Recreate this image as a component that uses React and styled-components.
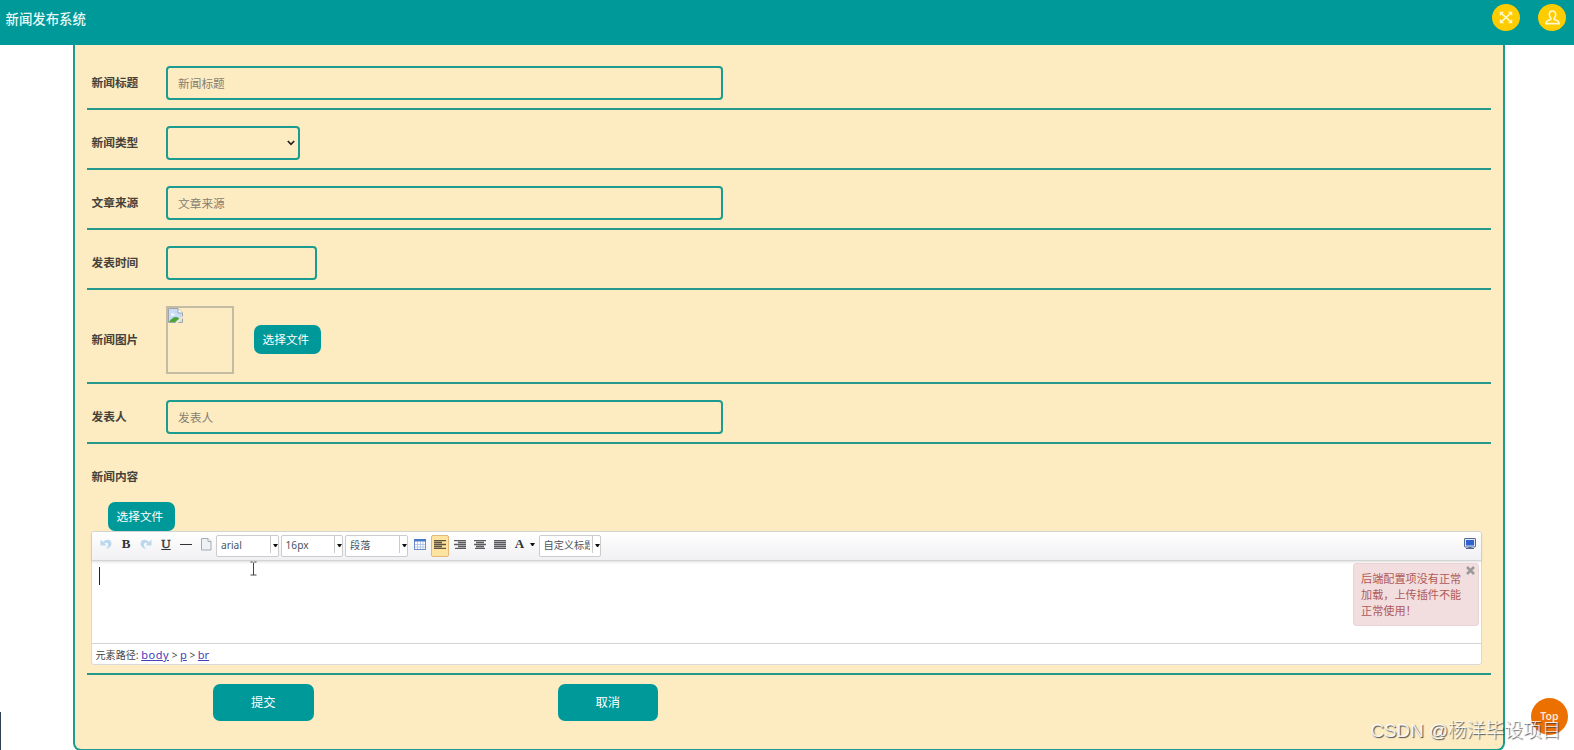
import React from 'react';
import styled, { createGlobalStyle, css } from 'styled-components';

const GlobalStyle = createGlobalStyle`
    * {
        box-sizing: border-box;
    }

    body {
        margin: 0;
        overflow: hidden;
        background: #fff;
        font-family: 'Noto Sans', 'Noto Sans CJK SC', sans-serif;
    }
`;

const Page = styled.div`
    position: relative;
    height: 750px;
    overflow: hidden;
`;

const Header = styled.header`
    display: flex;
    justify-content: space-between;
    height: 45px;
    padding: 4px 8px 0 5.5px;
    background: #099;
`;

const Title = styled.div`
    height: 30px;
    line-height: 30px;
    color: #e8f8f6;
    font-size: 13.4px;
    font-weight: 500;
`;

const HeaderActions = styled.div`
    display: flex;
    gap: 18px;
`;

const RoundButton = styled.div`
    display: flex;
    align-items: center;
    justify-content: center;
    width: 28px;
    height: 27px;
    border-radius: 50%;
    background: #fc0;
`;

const Panel = styled.main`
    width: 1432px;
    height: 706px;
    margin-left: 73px;
    padding: 5px 12px 0;
    border: 2px solid #1c9c90;
    border-top: 0;
    border-radius: 0 0 8px 8px;
    background: #fdecc2;
`;

const Row = styled.div`
    display: flex;
    align-items: center;
    height: ${({ $height }) => $height || 60}px;
    padding: 7px 0 0 4px;
    border-bottom: 2px solid #259a8c;
`;

const Label = styled.label`
    width: 75px;
    padding: 0 0 2px 0.5px;
    color: #45423a;
    font-size: 11.7px;
    font-weight: 600;
    line-height: 18px;
`;

const field = css`
    width: ${({ $width }) => $width}px;
    height: 34px;
    border: 2px solid #1c9c90;
    border-radius: 4px;
    background: transparent;
`;

const Input = styled.input`
    ${field}
    padding: 0 10px;
    outline: 0;
    font-family: inherit;
    font-size: 11.7px;

    &::placeholder {
        color: #857f71;
    }
`;

const Select = styled.div`
    ${field}
    display: flex;
    align-items: center;
    justify-content: flex-end;
    padding-right: 3px;
`;

const Preview = styled.div`
    width: 68px;
    height: 68px;
    margin: 1px 20px 0 0;
    border: 2px solid #c3bba4;

    svg {
        display: block;
    }
`;

const FileButton = styled.div`
    width: 67px;
    height: 29px;
    padding-left: 8.5px;
    border-radius: 7px;
    background: #099;
    color: #fff;
    font-size: 11.7px;
    line-height: 28px;
`;

const ContentRow = styled.div`
    height: 231px;
    padding: 24px 9px 0 4px;
    border-bottom: 2px solid #259a8c;
`;

const ContentLabel = styled(Label)`
    display: block;
    margin-bottom: 16px;
    padding-bottom: 0;
    line-height: 17px;
`;

const ContentFile = styled(FileButton)`
    margin: 17px 0 0 17px;
`;

const Editor = styled.div`
    position: relative;
    height: 134px;
    border: 1px solid #d9d9d9;
    border-radius: 3px;
    background: #fff;
`;

const Toolbar = styled.div`
    display: flex;
    align-items: center;
    height: 29px;
    padding: 0 4px 4px 4px;
    border-bottom: 1px solid #d4d4d4;
    border-radius: 3px 3px 0 0;
    background: linear-gradient(#fff, #f1f0f3);
    box-shadow: 0 1px 3px rgba(0, 0, 0, 0.14);
`;

const Tool = styled.span`
    display: flex;
    flex: none;
    align-items: center;
    justify-content: center;
    width: 20px;
    height: 22px;
    color: #333;
    font: ${({ $bold }) => ($bold ? 'bold' : 'normal')} 13px/20px 'Liberation Serif', serif;
    text-decoration: ${({ $underline }) => ($underline ? 'underline' : 'none')};
`;

const Underlined = styled(Tool)`
    -webkit-text-stroke: 0.4px #333;
`;

const ActiveTool = styled(Tool)`
    width: 18px;
    margin: 3px 1px 0;
    padding-bottom: 3px;
    border: 1px solid #e0b878;
    border-radius: 2px;
    background: #ffe39f;
`;

const Combo = styled.span`
    display: flex;
    flex: none;
    width: 62.5px;
    height: 22px;
    margin: 3px 2px 0 0;
    border: 1px solid #ccc;
    border-radius: 2px;
    background: #fff;
`;

const ComboText = styled.span`
    width: 54px;
    height: 17px;
    padding-left: 4px;
    overflow: hidden;
    border-right: 1px solid #ccc;
    color: #4a5560;
    font-size: 10.2px;
    line-height: 18px;
    white-space: nowrap;
`;

const ComboClip = styled.span`
    display: block;
    width: 46px;
    overflow: hidden;
`;

const Arrow = styled.span`
    width: 5px;
    height: 3px;
    margin: ${({ $inline }) => ($inline ? '1px 4px 0 0' : '8px 0 0 2px')};
    border: 2.5px solid transparent;
    border-top: 3px solid #111;
    border-bottom: 0;
`;

const EndTool = styled(Tool)`
    width: 14px;
    margin-left: auto;
    padding-bottom: 2px;
`;

const EditBody = styled.div`
    height: 82px;
    padding: 6px 7px;
`;

const Caret = styled.div`
    width: 1px;
    height: 18px;
    background: #222;
`;

const PathBar = styled.div`
    height: 21px;
    padding-left: 3.5px;
    border-top: 1px solid #d4d4d4;
    color: #444;
    font-size: 10.1px;
    line-height: 21px;
`;

const PathLink = styled.a`
    color: #4640b8;
    font-size: 11px;
    letter-spacing: ${({ $spacing }) => $spacing || 0}px;
    text-decoration: underline;
`;

const Message = styled.div`
    position: absolute;
    top: 31px;
    right: 2px;
    width: 126px;
    height: 63px;
    padding: 7px 16px 0 7px;
    border: 1px solid #ebd3d5;
    border-radius: 3px;
    background: #f2dede;
    color: #b05a59;
    font-size: 11.15px;
    line-height: 16px;
    white-space: nowrap;
`;

const Close = styled.svg`
    position: absolute;
    top: 2px;
    right: 3px;
`;

const Pointer = styled.svg`
    position: absolute;
    top: 29px;
    left: 158px;
`;

const Buttons = styled.div`
    display: flex;
    gap: 244px;
    padding: 8.5px 0 0 126px;
`;

const FormButton = styled.div`
    width: 100.5px;
    height: 37px;
    border-radius: 7px;
    background: #099;
    color: #fff;
    font-size: 12.3px;
    line-height: 38px;
    text-align: center;
`;

const TopButton = styled.div`
    position: absolute;
    top: 698px;
    left: 1531px;
    width: 37px;
    height: 37px;
    border-radius: 50%;
    background: #ec7000;
    color: #fbe6d2;
    font-size: 10.5px;
    font-weight: 600;
    line-height: 37px;
    text-align: center;
`;

const Watermark = styled.div`
    position: absolute;
    top: 716px;
    left: 1370.5px;
    color: rgba(255, 255, 255, 0.88);
    font-family: 'Liberation Sans', 'Noto Sans CJK SC', sans-serif;
    font-size: 18.8px;
    font-weight: 300;
    line-height: 30px;
    text-shadow: 1px 1px 1px rgba(60, 60, 60, 0.9);
    white-space: nowrap;
`;

const SideTab = styled.div`
    position: absolute;
    top: 712px;
    left: 0;
    width: 1px;
    height: 38px;
    background: #2f4050;
`;

const ExpandIcon = () => (
    <svg width="14" height="13" viewBox="0 0 15 14" fill="none" stroke="#fff8d0" strokeWidth="1.7">
        <path d="M2 2l11 10M13 2L2 12" />
        <path d="M.8.800h4.700L.8 5.500zM14.200.8v4.700L9.500.8zM.8 13.200V8.500l4.700 4.700zM14.200 13.200H9.500l4.700-4.700z" fill="#fff8d0" stroke="none" />
    </svg>
);

const UserIcon = () => (
    <svg width="15" height="15" viewBox="0 0 15 15" fill="none" stroke="#fff8d0" strokeWidth="1.6">
        <path d="M7.500 1C5.500 1 4.300 2.400 4.300 4.500c0 1.700.6 2.900 1.500 3.700v1.300L2.500 10.800C1.400 11.300 1 12.300.9 13.600h13.200c-.1-1.300-.5-2.300-1.600-2.800L9.200 9.500V8.200c.9-.8 1.500-2 1.500-3.700C10.700 2.400 9.500 1 7.500 1z" />
    </svg>
);

const UndoIcon = ({ flip }) => (
    <svg width="12" height="12" viewBox="0 0 12 12" transform={flip ? 'scale(-1 1)' : undefined}>
        <path d="M.5 1.500v6h6L4.500 5.600c1.800-1.500 3.600-.6 3.600 1.200 0 1.500-.8 2.500-2 4.200 3-.7 5.400-2.800 5.400-5.500C11.500 1.500 6.500.100 3 3.900z" fill="#bcd8ee" />
    </svg>
);

const PageIcon = () => (
    <svg width="12" height="13" viewBox="0 0 12 13">
        <path d="M1.500.5h6.500l3 3v8.500h-9.500z" fill="#eef2f6" stroke="#a5abb3" />
        <path d="M8 .5v3h3" fill="#fff" stroke="#a5abb3" />
    </svg>
);

const TableIcon = () => (
    <svg width="12" height="11" viewBox="0 0 12 11">
        <rect x=".5" y=".5" width="11" height="10" fill="#fff" stroke="#6d8fc9" />
        <rect width="12" height="2.500" fill="#4878c8" />
        <path d="M1 5.500h10M1 8h10M3.500 3v7M6.500 3v7M9 3v7" stroke="#a7bfdf" strokeWidth=".8" />
    </svg>
);

const alignLines = {
    left: 'M0 .5h12M0 2.500h8M0 4.500h12M0 6.500h8M0 8.500h12',
    right: 'M0 .5h12M4 2.500h8M0 4.500h12M4 6.500h8M1 8.500h11',
    center: 'M0 .5h12M2 2.500h8M0 4.500h12M2 6.500h8M1 8.500h10',
    justify: 'M0 .5h12M0 2.500h12M0 4.500h12M0 6.500h12M0 8.500h12',
};

const AlignIcon = ({ type }) => (
    <svg width="12" height="9" viewBox="0 0 12 9">
        <path d={alignLines[type]} stroke={type === 'left' ? '#5d5644' : '#5c5a60'} strokeWidth="1.3" />
    </svg>
);

const MonitorIcon = () => (
    <svg width="12" height="11" viewBox="0 0 12 11">
        <rect x=".5" y=".5" width="11" height="8.500" rx=".5" fill="#dfe7f5" stroke="#53698f" />
        <rect x="2" y="2" width="8" height="5.500" fill="#2f62cf" />
        <path d="M4.500 9h3v1H10v1H2v-1h2.500z" fill="#53698f" />
    </svg>
);

const BrokenImage = () => (
    <svg width="15" height="15" viewBox="0 0 15 15">
        <path d="M.5.5h9.500l4.500 4.500v9.500H.5z" fill="#c8dcf5" stroke="#a0a5ac" />
        <path d="M10 .5V5h4.500" fill="#fff" stroke="#a0a5ac" />
        <path d="M3 6.500c0-1.500 2-1.800 2.400-.6C7 5.500 7.300 7.500 6 7.500H3z" fill="#fff" />
        <path d="M1 14c1.500-3 4.500-5 7-5 2 0 2.800 1 3 2l-4 3z" fill="#4ca636" />
        <path d="M7.500 15L15 8v2l-5 5z" fill="#fdecc2" />
    </svg>
);

const ComboBox = ({ text }) => (
    <Combo>
        <ComboText>
            <ComboClip>{text}</ComboClip>
        </ComboText>
        <Arrow />
    </Combo>
);

const TextRow = ({ label }) => (
    <Row>
        <Label>{label}</Label>
        <Input $width={557} placeholder={label} />
    </Row>
);

export default () => (
    <Page>
        <GlobalStyle />
        <Header>
            <Title>新闻发布系统</Title>
            <HeaderActions>
                <RoundButton>
                    <ExpandIcon />
                </RoundButton>
                <RoundButton>
                    <UserIcon />
                </RoundButton>
            </HeaderActions>
        </Header>
        <Panel>
            <TextRow label="新闻标题" />
            <Row>
                <Label>新闻类型</Label>
                <Select $width={134}>
                    <svg width="8" height="6" viewBox="0 0 8 6">
                        <path d="M.8 1L4 4.300 7.200 1" fill="none" stroke="#222" strokeWidth="1.700" />
                    </svg>
                </Select>
            </Row>
            <TextRow label="文章来源" />
            <Row>
                <Label>发表时间</Label>
                <Input $width={151} />
            </Row>
            <Row $height={94}>
                <Label>新闻图片</Label>
                <Preview>
                    <BrokenImage />
                </Preview>
                <FileButton>选择文件</FileButton>
            </Row>
            <TextRow label="发表人" />
            <ContentRow>
                <ContentLabel>新闻内容</ContentLabel>
                <ContentFile>选择文件</ContentFile>
                <Editor>
                    <Toolbar>
                        <Tool><UndoIcon /></Tool>
                        <Tool $bold>B</Tool>
                        <Tool><UndoIcon flip /></Tool>
                        <Underlined $underline>U</Underlined>
                        <Tool>
                            <svg width="12" height="1"><path d="M0 .5h12" stroke="#333" /></svg>
                        </Tool>
                        <Tool><PageIcon /></Tool>
                        <ComboBox text="arial" />
                        <ComboBox text="16px" />
                        <ComboBox text="段落" />
                        <Tool><TableIcon /></Tool>
                        <ActiveTool><AlignIcon type="left" /></ActiveTool>
                        <Tool><AlignIcon type="right" /></Tool>
                        <Tool><AlignIcon type="center" /></Tool>
                        <Tool><AlignIcon type="justify" /></Tool>
                        <Tool $bold>A</Tool>
                        <Arrow $inline />
                        <ComboBox text="自定义标题" />
                        <EndTool><MonitorIcon /></EndTool>
                    </Toolbar>
                    <EditBody>
                        <Caret />
                    </EditBody>
                    <PathBar>
                        元素路径: <PathLink $spacing={0.5}>body</PathLink> &gt; <PathLink>p</PathLink> &gt; <PathLink>br</PathLink>
                    </PathBar>
                    <Message>
                        <div>后端配置项没有正常</div>
                        <div>加载，上传插件不能</div>
                        <div>正常使用！</div>
                        <Close width="9" height="9" viewBox="0 0 9 9">
                            <path d="M1 1l7 7M8 1l-7 7" stroke="#999" strokeWidth="2.500" />
                        </Close>
                    </Message>
                    <Pointer width="7" height="15" viewBox="0 0 7 15">
                        <path d="M.5 1h2.200M4.300 1h2.200M.5 14h6M3.500 1.500V14" fill="none" stroke="#444" />
                    </Pointer>
                </Editor>
            </ContentRow>
            <Buttons>
                <FormButton>提交</FormButton>
                <FormButton>取消</FormButton>
            </Buttons>
        </Panel>
        <SideTab />
        <TopButton>Top</TopButton>
        <Watermark>CSDN @杨洋毕设项目</Watermark>
    </Page>
);
